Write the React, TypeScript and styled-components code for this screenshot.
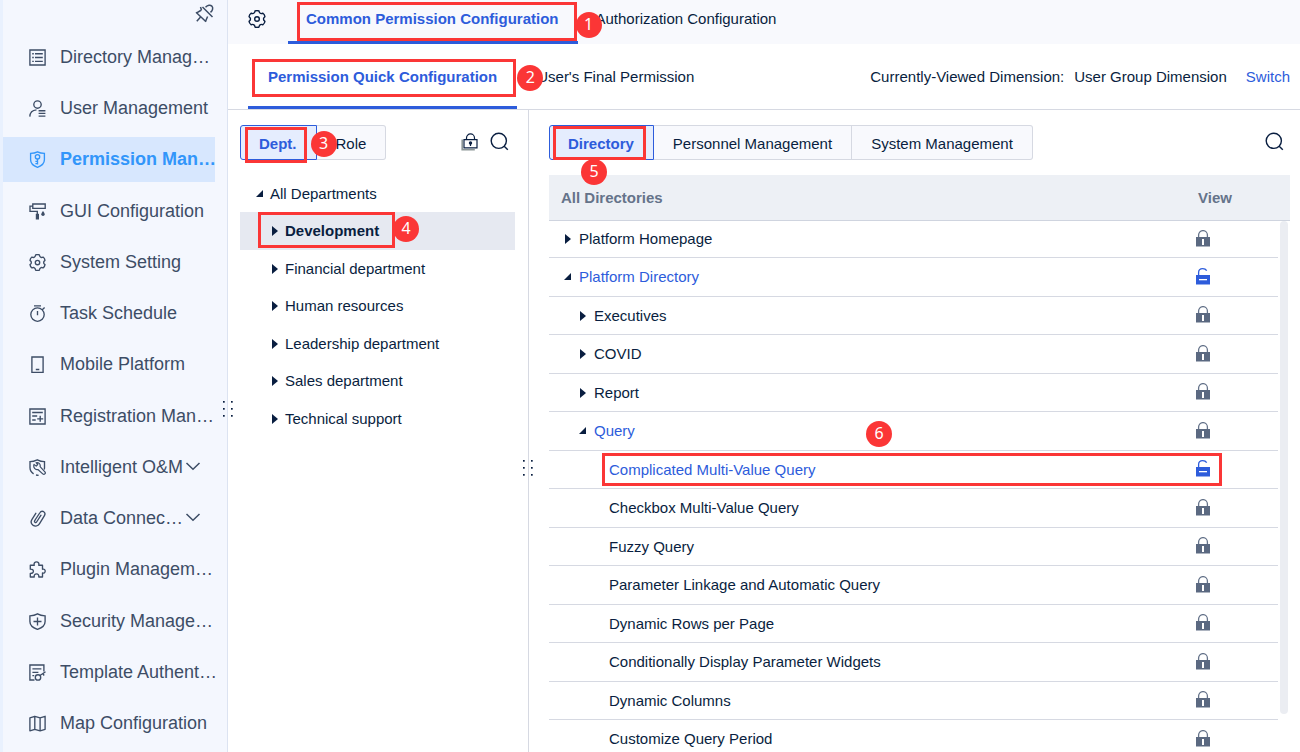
import React, { useState } from 'react';
import styled, { createGlobalStyle, css } from 'styled-components';

const ink = '#091e40';
const blue = '#2d5cdb';
const line = '#d6d9e2';
const red = '#fb3636';

const GlobalStyle = createGlobalStyle`
  *, *::before, *::after { box-sizing: border-box; }
  body {
    margin: 0;
    background: #fff;
    color: ${ink};
    font: 15px/20px "Liberation Sans", Arial, sans-serif;
  }
  button { font: inherit; color: inherit; background: none; border: 0; padding: 0; cursor: pointer; text-align: left; }
  ul { list-style: none; margin: 0; padding: 0; }
  svg { display: block; flex: none; }
`;

/* ---------- shell ---------- */

const Shell = styled.div`
  display: grid;
  grid-template-columns: 228px minmax(0, 1fr);
  height: 100vh;
  overflow: hidden;
`;

const Sidebar = styled.aside`
  position: relative;
  border-left: 3px solid #e9f1fe;
  border-right: 1px solid #dce3f1;
  background: #f4f7fe;
  color: #3d4d66;
`;

const SidebarTop = styled.div`
  display: flex;
  justify-content: flex-end;
  align-items: flex-start;
  height: 35px;
  padding: 4px 13px 0 0;
`;

const NavList = styled.ul`
  display: flex;
  flex-direction: column;
  gap: 6px;
  margin-right: 12px;

  li:nth-child(4n) { margin-top: 1px; }
`;

const NavButton = styled.button<{ $active?: boolean }>`
  display: flex;
  align-items: center;
  gap: 14px;
  width: 100%;
  height: 45px;
  padding-left: 26px;
  font-size: 18px;
  white-space: nowrap;
  ${({ $active }) => $active && css`
    background: #d7e7fe;
    color: #3296fa;
    font-weight: bold;
  `}
`;

const NavLabel = styled.span`
  display: flex;
  align-items: center;
  gap: 2px;
  padding-bottom: 2px;
`;

const Main = styled.main`
  display: grid;
  grid-template-rows: auto auto minmax(0, 1fr);
  min-width: 0;
`;

const Grip = styled.span`
  position: absolute;
  z-index: 1;
  right: -7px;
  top: 401px;
  color: ${ink};
`;

const PanelGrip = styled(Grip)`
  top: 350px;
  right: -6px;
`;

/* ---------- tab bars ---------- */

const TopBar = styled.header`
  display: flex;
  height: 44px;
  background: #f8f9fd;
`;

const GearButton = styled.button`
  width: 60px;
  height: 38px;
  padding-left: 20px;
`;

const SubBar = styled.div`
  display: flex;
  height: 66px;
  padding: 0 10px 0 20px;
  border-bottom: 1px solid ${line};
`;

const Tab = styled.button<{ $active?: boolean }>`
  position: relative;
  display: flex;
  align-items: center;
  padding: 0 20px;
  white-space: nowrap;
  ${({ $active }) => $active && css`
    color: ${blue};
    font-weight: bold;
    box-shadow: inset 0 -3px 0 ${blue};
  `}
`;

const TopTab = styled(Tab)`
  padding: 0 19px 6px 18px;
`;

const Dimension = styled.div`
  display: flex;
  align-items: center;
  gap: 10px;
  margin-left: auto;
  white-space: nowrap;
`;

const SwitchLink = styled.a`
  margin-left: 9px;
  color: ${blue};
  text-decoration: none;
`;

/* ---------- panels ---------- */

const Panels = styled.div`
  display: grid;
  grid-template-columns: 301px minmax(0, 1fr);
  min-height: 0;
`;

const DeptPanel = styled.section`
  position: relative;
  padding: 15px 13px 0 12px;
  border-right: 1px solid ${line};
`;

const DirectoryPanel = styled.section`
  position: relative;
  min-height: 0;
  padding: 15px 10px 0 20px;
  overflow: hidden;
`;

const Toolbar = styled.div`
  display: flex;
  align-items: center;
  height: 35px;
  margin-bottom: 15px;
`;

const Segments = styled.div`
  display: flex;
  height: 35px;
`;

const Segment = styled.button<{ $active?: boolean }>`
  position: relative;
  padding: 2px 19px 0;
  border: 1px solid ${line};
  border-left-width: 0;
  background: #f8f9fd;
  white-space: nowrap;

  &:last-child { border-radius: 0 3px 3px 0; }

  ${({ $active }) => $active && css`
    padding: 2px 19px 0 18px;
    border: 1px solid ${blue};
    border-radius: 3px 0 0 3px;
    background: #e5edfe;
    color: ${blue};
    font-weight: bold;
  `}
`;

const Tools = styled.div`
  display: flex;
  align-items: center;
  gap: 12px;
  margin-left: auto;
  padding: 0 6px 2px 0;
`;

/* ---------- department tree ---------- */

const Tree = styled.ul`
  li:nth-child(even) button { height: 38px; }
`;

const TreeNode = styled.button<{ $depth: number; $selected?: boolean }>`
  position: relative;
  display: flex;
  align-items: center;
  gap: 6px;
  width: 100%;
  height: 37px;
  padding-left: ${({ $depth }) => 16 + $depth * 15}px;
  ${({ $selected }) => $selected && css`
    background: #e6e9f1;
    font-weight: bold;
  `}
`;

/* ---------- directory table ---------- */

const TableArea = styled.div`
  position: relative;
`;

const Table = styled.table`
  width: 100%;
  table-layout: fixed;
  border-collapse: separate;
  border-spacing: 0;

  th {
    height: 46px;
    padding: 0 0 0 12px;
    border-bottom: 1px solid #cfd4df;
    background: #edf0f5;
    color: #65738a;
    text-align: left;
  }
  th:nth-child(2) { padding-left: 2px; }
  td { height: 38px; padding: 0; border-bottom: 1px solid ${line}; }
  tr:nth-child(even) td { height: 39px; }
  tr:first-child td { height: 37px; }
  td:nth-child(2) { padding-bottom: 2px; }
  td:last-child { border-bottom: 0; }
`;

const NameCol = styled.col``;
const ViewCol = styled.col`width: 82px;`;
const GutterCol = styled.col`width: 12px;`;

const Row = styled.tr`
  position: relative;
`;

const Name = styled.div<{ $depth: number; $granted?: boolean }>`
  display: flex;
  align-items: center;
  gap: 7px;
  padding-left: ${({ $depth }) => 15 + $depth * 15}px;
  color: ${({ $granted }) => ($granted ? blue : ink)};
`;

const Toggle = styled.button`
  color: ${ink};
`;

const LockButton = styled.button`
  display: block;
`;

const Scrollbar = styled.div`
  position: absolute;
  top: 46px;
  right: 2px;
  width: 8px;
  height: 493px;
  border-radius: 4px;
  background: #ebedf2;
`;

/* ---------- numbered call-outs ---------- */

const Outline = styled.span<{ $inset: string }>`
  position: absolute;
  z-index: 2;
  inset: ${({ $inset }) => $inset};
  border: 3px solid ${red};
  pointer-events: none;
`;

const Badge = styled.span<{ $top: number; $right?: number; $left?: number }>`
  position: absolute;
  z-index: 3;
  top: ${({ $top }) => $top}px;
  ${({ $right }) => $right !== undefined && `right: ${$right}px;`}
  ${({ $left }) => $left !== undefined && `left: ${$left}px;`}
  width: 26px;
  height: 26px;
  border-radius: 50%;
  background: ${red};
  color: #fff;
  font: 16px/24px "Noto Sans", sans-serif;
  text-align: center;
`;

/* ---------- icons ---------- */

const gearPath = (() => {
  const point = (deg: number, r: number) => {
    const a = (deg * Math.PI) / 180;
    return `${(8.5 + r * Math.cos(a)).toFixed(2)} ${(8.5 + r * Math.sin(a)).toFixed(2)}`;
  };
  let d = '';
  for (let k = 0; k < 6; k += 1) {
    const a = -90 + k * 60;
    d += `${k ? '' : 'M' + point(a - 14, 7.8)}Q${point(a, 8.4)} ${point(a + 14, 7.8)}`;
    d += `Q${point(a + 22, 5.9)} ${point(a + 30, 6.3)}Q${point(a + 38, 5.9)} ${point(a + 46, 7.8)}`;
  }
  return d + 'Z';
})();

const Icon = ({ children, size = 17 }: { children: React.ReactNode; size?: number }) => (
  <svg width={size} height={size} viewBox="0 0 17 17" fill="none" stroke="currentColor" strokeWidth="1.35" aria-hidden="true">
    {children}
  </svg>
);

const Gear = ({ size }: { size?: number }) => (
  <Icon size={size}>
    <path d={gearPath} strokeLinejoin="round" />
    <circle cx="8.5" cy="8.5" r="2.2" />
  </Icon>
);

const icons: Record<string, React.ReactNode> = {
  directory: (
    <Icon>
      <path d="M.9 1h15.2v15H.9z" />
      <path d="M3.2 4.7h1.6M3.2 8.5h1.6M3.2 12.3h1.6M6 4.7h7.8M6 8.5h7.8M6 12.3h7.8" />
    </Icon>
  ),
  user: (
    <Icon>
      <circle cx="8.5" cy="4.5" r="3.7" />
      <path d="M.8 16.6c.2-3.8 2.7-6.4 6.7-6.7M9.6 10.7h6.8M9.6 13.4h6.8M9.6 16.1h6.8" />
    </Icon>
  ),
  permission: (
    <Icon>
      <path d="M8.5.8c2 1 4.3 1.5 6.9 1.6v6.4c0 3.5-2.500 6-6.900 7.500-4.400-1.500-6.900-4-6.900-7.500V2.400c2.600-.1 4.900-.6 6.900-1.600z" />
      <circle cx="8.5" cy="5.8" r="2.2" />
      <path d="M8.5 8v5.600M8.500 10.300H6.400M8.500 12.600H6.400" />
    </Icon>
  ),
  gui: (
    <Icon>
      <path d="M3.8 1h12.4v4.300H3.800zM3.800 3.100H1v5.300h7.300v2.800" />
      <path d="M6.800 10.800H10v5.700H6.800z" fill="currentColor" stroke="none" />
      <path d="M14 8c1.200 1.700 1.700 2.500 1.700 3.300a1.700 1.700 0 0 1-3.400 0c0-.8.5-1.600 1.700-3.300z" fill="currentColor" stroke="none" />
    </Icon>
  ),
  gear: <Gear />,
  task: (
    <Icon>
      <circle cx="8.5" cy="9.6" r="6.7" />
      <path d="M5 .8h7M8.500 6v4.200M13 5l2.600-2.600" />
    </Icon>
  ),
  mobile: (
    <Icon>
      <path d="M2.900 1h11.200v15.400H2.900zM6.800 13.500h3.500" />
    </Icon>
  ),
  registration: (
    <Icon>
      <path d="M.9 1h15.2v15H.9z" />
      <path d="M3.200 4.500h10.600M3.200 8h5M3.200 12h3.500M11.200 7.800v6M8.200 10.900h6" />
    </Icon>
  ),
  operation: (
    <Icon>
      <path d="M4.600 14.900C2.200 13.300 1 11.500 1 8.800V2.700C4 2.600 6 1.900 8.300.8c2.200 1.100 4.200 1.800 7.200 1.900v6.100c0 .6-.1 1.200-.3 1.700M7 16l2.600.5" />
      <path d="m5 5.400 2.200 1.700 1.500-1.600-1.600-1.800c2.200-.7 4.700 1.300 4 3.900l5 5.500c.8 1.300-.8 2.900-2.100 2L8.900 10.500c-2.600.9-4.900-1.900-3.900-5.100z" strokeWidth="1.2" strokeLinejoin="round" />
    </Icon>
  ),
  data: (
    <Icon>
      <path d="M12 5.200 7.600 12c-.8 1.200-2.600.4-2-1.100.2-.5.5-.9.8-1.400L10.700 3c1-1.600 2.500-2.200 4-1.300 1.700 1.100 1.500 2.700.6 4.200l-4.900 8c-1.400 2.200-4.100 2.800-6.200 1.500-2.500-1.700-2.600-3.900-1.200-6.100l3.800-6" strokeLinecap="round" />
    </Icon>
  ),
  plugin: (
    <Icon>
      <path d="M1.300 4.200h4c-.8-2 .6-3.400 2.200-3.400s3 1.400 2.200 3.400h3.800v4c1.700-.5 2.700.5 2.700 1.900s-1 2.400-2.700 1.900v4H9.800c.3-2.100-.9-3.100-2.300-3.100s-2.600 1-2.300 3.100H1.300v-3.600c2 .2 3.100-.8 3.100-2.200S3.300 8 1.300 8.200z" strokeLinejoin="round" />
    </Icon>
  ),
  security: (
    <Icon>
      <path d="M8.500.8c2 1.200 4.600 1.900 7.600 2v5.800c0 3.800-2.800 6.300-7.600 7.800C3.700 14.900.9 12.400.9 8.600V2.800c3-.1 5.600-.8 7.600-2z" />
      <path d="M8.500 4.500v8M4.500 8.500h8" />
    </Icon>
  ),
  template: (
    <Icon>
      <path d="M5.500 16H.9V1h14v6.500M3.400 4.800h9M3.400 8.300h6M3.400 11.600h1.800" />
      <circle cx="9" cy="13.4" r="2.7" />
      <path d="m11 11.500 5.500-3.700M13.800 9.600l1.400 1.900" />
    </Icon>
  ),
  map: (
    <Icon>
      <path d="m.9 2.800 4.900-1.500 5.300 1.500 5-1.500v13l-5 1.500-5.300-1.500-4.900 1.500zM5.800 1.300v13M11.100 2.800v13" strokeLinejoin="round" />
    </Icon>
  ),
};

const Pin = () => (
  <svg width="19" height="19" viewBox="0 0 19 19" fill="none" stroke="currentColor" strokeWidth="1.5" aria-hidden="true">
    <path d="M1 8.300 11 17.800M7.500 3l10 10" />
    <path d="M1.700 8.900 6.500 6M10.600 17.300l2-4.800M5.600 13l-3.800 4.300M10.500 3.300c2.300-2.300 4.800-2.700 6.300-1.200 1.600 1.700 1 4.200-1.300 6.300M6.500 6l-1-3" />
  </svg>
);

const Chevron = () => (
  <svg width="16" height="9" viewBox="0 0 16 9" fill="none" stroke="currentColor" strokeWidth="1.5" aria-hidden="true">
    <path d="m1.500 1 6.500 6.300L14.500 1" />
  </svg>
);

const Search = () => (
  <svg width="19" height="19" viewBox="0 0 19 19" fill="none" stroke="currentColor" strokeWidth="1.4" aria-hidden="true">
    <circle cx="8.8" cy="8.8" r="7.6" />
    <path d="m14.200 14.200 3.600 3.600" />
  </svg>
);

const BatchLock = () => (
  <svg width="17" height="18" viewBox="0 0 17 18" fill="none" stroke="currentColor" strokeWidth="1.2" aria-hidden="true">
    <path d="M1.200 6.500v10.200h12.600" stroke="#8d9797" strokeWidth="1.6" />
    <path d="M3 6.600h13v8.200H3z" />
    <path d="M5.500 6.600V4.900a4 4 0 0 1 8 0v1.700M9.500 10.500V13" />
    <circle cx="9.5" cy="10" r="1.1" fill="currentColor" />
  </svg>
);

const Locked = () => (
  <svg width="14" height="17" viewBox="0 0 14 17" aria-hidden="true">
    <path d="M2.600 7.500V5a4.400 4.400 0 0 1 8.800 0v2.500" fill="none" stroke="#65738a" strokeWidth="1.3" />
    <path d="M0 7h14v9.500H0z" fill="#5b6981" />
    <path d="M6 9h2v6H6z" fill="#fff" />
  </svg>
);

const Unlocked = () => (
  <svg width="14" height="17" viewBox="0 0 14 17" aria-hidden="true">
    <path d="M2.600 7.500V4.600C2.600 2.200 4.300.7 6.700.7c1.800 0 3.200.7 4 2" fill="none" stroke={blue} strokeWidth="1.3" />
    <path d="M0 7h14v9.500H0z" fill={blue} />
    <path d="M3 11h8v1.300H3z" fill="#fff" />
  </svg>
);

const Arrow = ({ open }: { open?: boolean }) => (
  <svg width="8" height="10" viewBox="0 0 8 10" fill="currentColor" aria-hidden="true">
    <path d={open ? 'M7 1v7H0z' : 'M1 0l6 5-6 5z'} />
  </svg>
);

const GripDots = () => (
  <svg width="11" height="17" viewBox="0 0 11 17" fill="currentColor" aria-hidden="true">
    {[0, 7, 14].map((y) => (
      <React.Fragment key={y}>
        <rect x="0" y={y} width="1.7" height="1.7" />
        <rect x="8" y={y} width="1.7" height="1.7" />
      </React.Fragment>
    ))}
  </svg>
);

/* ---------- data ---------- */

const navItems: { icon: string; label: string; menu?: boolean }[] = [
  { icon: 'directory', label: 'Directory Manag…' },
  { icon: 'user', label: 'User Management' },
  { icon: 'permission', label: 'Permission Man…' },
  { icon: 'gui', label: 'GUI Configuration' },
  { icon: 'gear', label: 'System Setting' },
  { icon: 'task', label: 'Task Schedule' },
  { icon: 'mobile', label: 'Mobile Platform' },
  { icon: 'registration', label: 'Registration Man…' },
  { icon: 'operation', label: 'Intelligent O&M', menu: true },
  { icon: 'data', label: 'Data Connec…', menu: true },
  { icon: 'plugin', label: 'Plugin Managem…' },
  { icon: 'security', label: 'Security Manage…' },
  { icon: 'template', label: 'Template Authent…' },
  { icon: 'map', label: 'Map Configuration' },
];

const departments = [
  'Development',
  'Financial department',
  'Human resources',
  'Leadership department',
  'Sales department',
  'Technical support',
];

type Entry = { name: string; depth: number; node?: 'open' | 'closed'; blue?: boolean; unlocked?: boolean };

const entries: Entry[] = [
  { name: 'Platform Homepage', depth: 0, node: 'closed' },
  { name: 'Platform Directory', depth: 0, node: 'open', blue: true, unlocked: true },
  { name: 'Executives', depth: 1, node: 'closed' },
  { name: 'COVID', depth: 1, node: 'closed' },
  { name: 'Report', depth: 1, node: 'closed' },
  { name: 'Query', depth: 1, node: 'open', blue: true },
  { name: 'Complicated Multi-Value Query', depth: 3, blue: true, unlocked: true },
  { name: 'Checkbox Multi-Value Query', depth: 3 },
  { name: 'Fuzzy Query', depth: 3 },
  { name: 'Parameter Linkage and Automatic Query', depth: 3 },
  { name: 'Dynamic Rows per Page', depth: 3 },
  { name: 'Conditionally Display Parameter Widgets', depth: 3 },
  { name: 'Dynamic Columns', depth: 3 },
  { name: 'Customize Query Period', depth: 3 },
];

/* ---------- page ---------- */

export default function App() {
  const [nav, setNav] = useState('permission');
  const [dept, setDept] = useState('Development');

  return (
    <>
      <GlobalStyle />
      <Shell>
        <Sidebar>
          <SidebarTop>
            <button aria-label="Unpin menu"><Pin /></button>
          </SidebarTop>
          <NavList>
            {navItems.map((item) => (
              <li key={item.icon}>
                <NavButton $active={nav === item.icon} onClick={() => setNav(item.icon)}>
                  {icons[item.icon]}
                  <NavLabel>
                    {item.label}
                    {item.menu && <Chevron />}
                  </NavLabel>
                </NavButton>
              </li>
            ))}
          </NavList>
          <Grip><GripDots /></Grip>
        </Sidebar>

        <Main>
          <TopBar>
            <GearButton aria-label="Settings"><Gear size={18} /></GearButton>
            <TopTab $active>
              Common Permission Configuration
              <Outline $inset="2px 1px 3px 9px" />
              <Badge $top={12} $right={-24}>1</Badge>
            </TopTab>
            <TopTab>Authorization Configuration</TopTab>
          </TopBar>

          <SubBar>
            <Tab $active>
              Permission Quick Configuration
              <Outline $inset="15px 1px 12px 4px" />
              <Badge $top={21} $right={-26}>2</Badge>
            </Tab>
            <Tab>User's Final Permission</Tab>
            <Dimension>
              <span>Currently-Viewed Dimension:</span>
              <span>User Group Dimension</span>
              <SwitchLink href="#switch">Switch</SwitchLink>
            </Dimension>
          </SubBar>

          <Panels>
            <DeptPanel>
              <Toolbar>
                <Segments>
                  <Segment $active>
                    Dept.
                    <Outline $inset="1px 9px -4px 4px" />
                    <Badge $top={5} $right={-21}>3</Badge>
                  </Segment>
                  <Segment>Role</Segment>
                </Segments>
                <Tools>
                  <button aria-label="Batch permissions"><BatchLock /></button>
                  <button aria-label="Search departments"><Search /></button>
                </Tools>
              </Toolbar>
              <Tree>
                <li>
                  <TreeNode $depth={0}><Arrow open />All Departments</TreeNode>
                </li>
                {departments.map((name, i) => (
                  <li key={name}>
                    <TreeNode $depth={1} $selected={dept === name} onClick={() => setDept(name)}>
                      <Arrow />
                      {name}
                      {i === 0 && (
                        <>
                          <Outline $inset="0 120px 2px 18px" />
                          <Badge $top={4} $left={153}>4</Badge>
                        </>
                      )}
                    </TreeNode>
                  </li>
                ))}
              </Tree>
              <PanelGrip><GripDots /></PanelGrip>
            </DeptPanel>

            <DirectoryPanel>
              <Toolbar>
                <Segments>
                  <Segment $active>
                    Directory
                    <Outline $inset="0 7px -1px 3px" />
                    <Badge $top={33} $left={31}>5</Badge>
                  </Segment>
                  <Segment>Personnel Management</Segment>
                  <Segment>System Management</Segment>
                </Segments>
                <Tools>
                  <button aria-label="Search directories"><Search /></button>
                </Tools>
              </Toolbar>
              <TableArea>
                <Table>
                  <colgroup>
                    <NameCol />
                    <ViewCol />
                    <GutterCol />
                  </colgroup>
                  <thead>
                    <tr>
                      <th scope="col">All Directories</th>
                      <th scope="col" colSpan={2}>View</th>
                    </tr>
                  </thead>
                  <tbody>
                    {entries.map((entry) => (
                      <Row key={entry.name}>
                        <td>
                          <Name $depth={entry.depth} $granted={entry.blue}>
                            {entry.node && (
                              <Toggle aria-label={`Toggle ${entry.name}`}>
                                <Arrow open={entry.node === 'open'} />
                              </Toggle>
                            )}
                            {entry.name}
                          </Name>
                          {entry.depth === 3 && entry.unlocked && (
                            <>
                              <Outline $inset="2px 68px 3px 53px" />
                              <Badge $top={-30} $left={317}>6</Badge>
                            </>
                          )}
                        </td>
                        <td>
                          <LockButton aria-label={`View permission for ${entry.name}`}>
                            {entry.unlocked ? <Unlocked /> : <Locked />}
                          </LockButton>
                        </td>
                        <td />
                      </Row>
                    ))}
                  </tbody>
                </Table>
                <Scrollbar />
              </TableArea>
            </DirectoryPanel>
          </Panels>
        </Main>
      </Shell>
    </>
  );
}
